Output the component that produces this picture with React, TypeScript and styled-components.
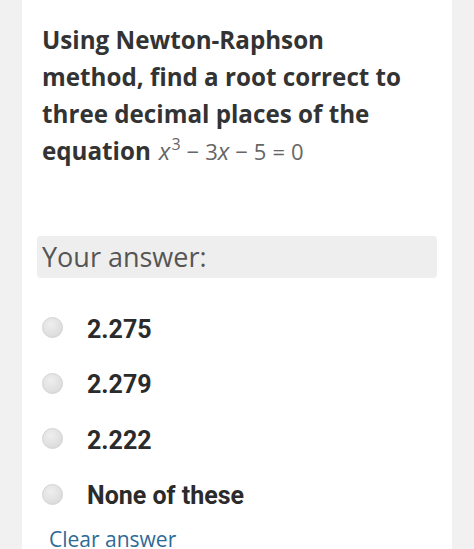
import React from "react";
import styled, { createGlobalStyle } from "styled-components";

const Global = createGlobalStyle`
  html, body { margin: 0; padding: 0; background: #f1f1f1; }
  body { font-family: "Open Sans", "Noto Sans", sans-serif; }
`;

const Page = styled.div`
  display: flex;
  justify-content: center;
  padding: 0 22px;
  min-height: 549px;
`;

const Card = styled.main`
  flex: 1;
  background: #ffffff;
  padding: 21px 15px 0;
  display: flex;
  flex-direction: column;
`;

const Title = styled.h1`
  margin: 0 30px 0 5px;
  font-family: "Open Sans", sans-serif;
  font-weight: 700;
  font-size: 24.2px;
  line-height: 37px;
  color: #333333;
`;

const Equation = styled.span`
  font-family: "Open Sans", sans-serif;
  font-weight: 400;
  font-size: 22px;
  color: #666666;
  margin-left: 8px;
  white-space: nowrap;
`;

const Var = styled.span`
  font-style: italic;
  font-size: 24px;
`;

const Sup = styled.span`
  display: inline-block;
  font-size: 16px;
  line-height: 16px;
  vertical-align: 10px;
  margin-left: 1px;
`;

const Op = styled.span`
  display: inline-block;
  margin: 0 6px;
`;

const AnswerBox = styled.div`
  margin-top: 66px;
  height: 42px;
  background: #eeeeee;
  border-radius: 4px;
  padding-left: 5px;
  font-size: 27px;
  line-height: 42px;
  color: #555555;
`;

const Options = styled.div`
  margin-top: 22px;
  display: flex;
  flex-direction: column;
`;

const Option = styled.label`
  display: flex;
  align-items: center;
  height: 55.5px;
  padding-left: 5px;
  gap: 24px;
`;

const Radio = styled.span`
  width: 21px;
  height: 21px;
  border-radius: 50%;
  box-sizing: border-box;
  background: radial-gradient(circle at 40% 35%, #eeeeee 0%, #e0e0e0 60%, #d4d4d4 100%);
  border: 1px solid #d2d2d2;
  flex: none;
`;

const OptionText = styled.span`
  font-family: Roboto, "Liberation Sans", sans-serif;
  font-weight: 700;
  font-size: 25px;
  color: #2b2b2b;
  margin-top: 3px;
`;

const ClearLink = styled.a`
  margin-top: 2px;
  padding-left: 12px;
  font-size: 21px;
  line-height: 30px;
  color: #2d6a96;
  text-decoration: none;
`;

const options = ["2.275", "2.279", "2.222", "None of these"];

export default function App() {
  return (
    <>
      <Global />
      <Page>
        <Card>
          <Title>
            Using Newton-Raphson method, find a root correct to three decimal
            places of the equation
            <Equation>
              <Var>x</Var>
              <Sup>3</Sup>
              <Op>−</Op>3<Var>x</Var>
              <Op>−</Op>5<Op>=</Op>0
            </Equation>
          </Title>
          <AnswerBox>Your answer:</AnswerBox>
          <Options>
            {options.map((o) => (
              <Option key={o}>
                <Radio />
                <OptionText>{o}</OptionText>
              </Option>
            ))}
          </Options>
          <ClearLink>Clear answer</ClearLink>
        </Card>
      </Page>
    </>
  );
}
